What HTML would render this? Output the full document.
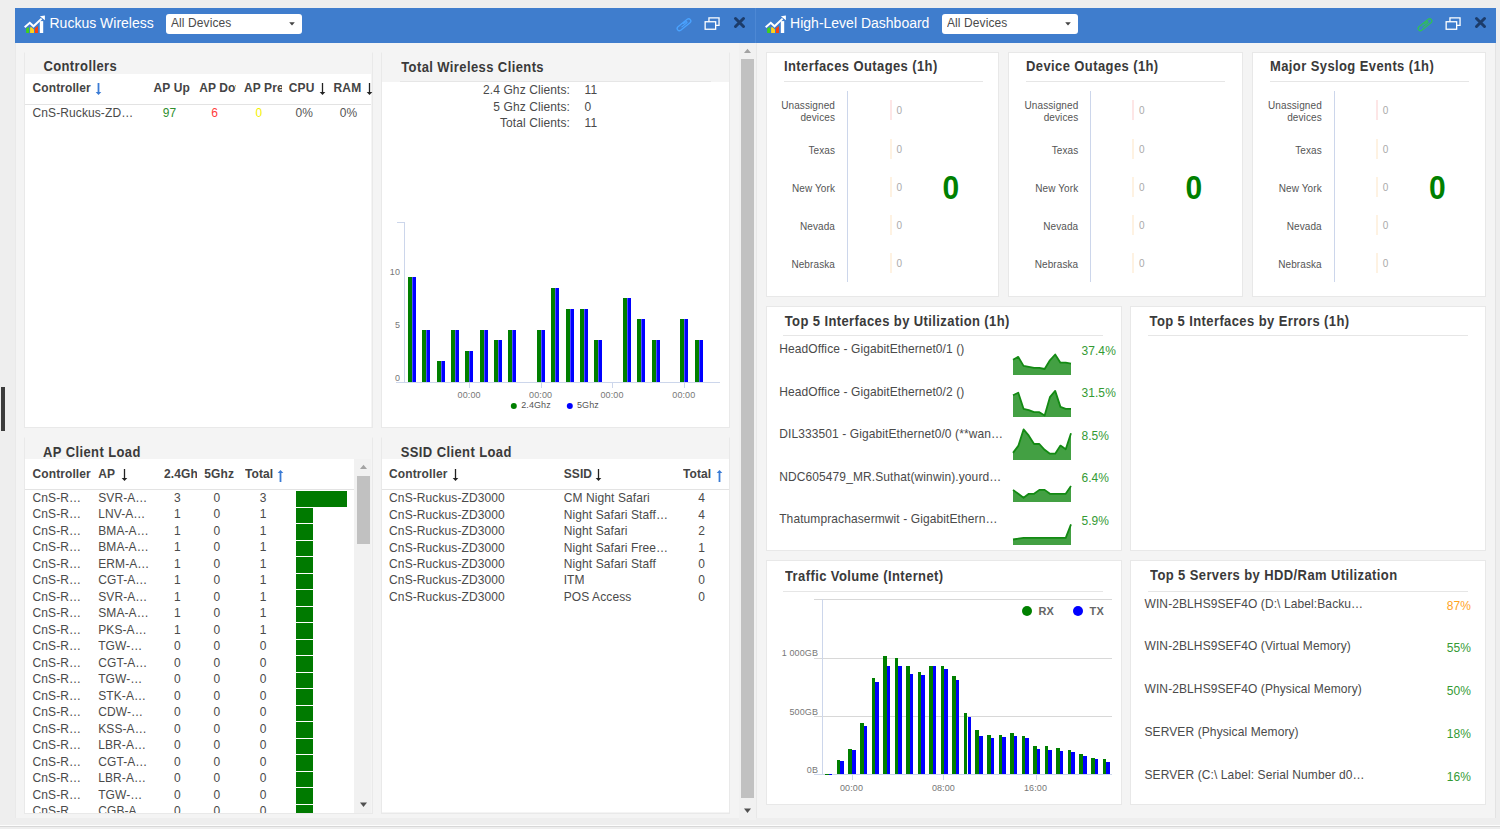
<!DOCTYPE html><html><head><meta charset="utf-8"><style>
html,body{margin:0;padding:0;}
body{width:1500px;height:829px;overflow:hidden;position:relative;background:#eeeeee;font-family:"Liberation Sans",sans-serif;}
.r{position:absolute;}
.t{position:absolute;white-space:nowrap;letter-spacing:0.1px;}
.card{position:absolute;background:#fff;border:1px solid #e8e8e8;box-sizing:border-box;}
</style></head><body>
<div class="r" style="left:15px;top:8px;width:741px;height:35px;background:#3f7dcd;"></div>
<svg class="r" style="left:20px;top:12px" width="30" height="26" viewBox="0 0 30 26">
<path d="M6.1 20.9 L6.1 17.4 Q6.1 15.6 7.6 15.6 L9.1 15.6 L9.1 20.9 Z" fill="#3fd21a"/>
<path d="M10.1 20.9 L10.1 15.2 L11.6 15.2 L14 17.6 L14 20.9 Z" fill="#ffd21a"/>
<path d="M14.9 20.9 L14.9 16.2 L17.9 13.9 L17.9 20.9 Z" fill="#ff3d0a"/>
<path d="M19.8 21 L19.8 9.1 L23.2 9.1 L23.2 21 Z" fill="#ffffff"/>
<polyline points="4.7,15.3 9.8,10.8 13.5,14.3 21.6,6.6" fill="none" stroke="#fff" stroke-width="2"/>
<path d="M19.9 4.2 L24.9 3.5 L24.9 8.3 Z" fill="#fff"/>
</svg>
<div class="t" style="left:49.5px;top:16px;font-size:14px;line-height:14px;color:#fff;letter-spacing:0px;">Ruckus Wireless</div>
<div class="r" style="left:166px;top:14px;width:136px;height:20px;background:#fff;border-radius:3px;"></div>
<div class="t" style="left:171px;top:17px;font-size:12px;line-height:12px;color:#4a4a4a;transform:scaleY(1.1);transform-origin:0 10px;">All Devices</div>
<svg class="r" style="left:288.5px;top:22.2px" width="6" height="4" viewBox="0 0 6 4"><path d="M0.2 0.2 L5.8 0.2 L3 3.4 Z" fill="#444"/></svg>
<svg class="r" style="left:673px;top:13.6px" width="22" height="20" viewBox="0 0 22 20">
<g transform="translate(6.3,14.5) rotate(-38.6)">
<rect x="-2.1" y="-2.2" width="16.2" height="4.4" rx="2.2" fill="none" stroke="#4aa3ff" stroke-width="1.3"/>
<path d="M2.6 0.3 L9.6 0.3 A0.9 0.9 0 0 0 9.6 -1.3 L6 -1.3" fill="none" stroke="#4aa3ff" stroke-width="1.1"/>
</g>
</svg>
<svg class="r" style="left:704px;top:16px" width="17" height="15" viewBox="0 0 17 15">
<path d="M4.95 5.75 L4.95 1.95 L15.05 1.95 L15.05 9.45 L11.65 9.45" fill="none" stroke="#fff" stroke-width="1.3"/>
<rect x="1.15" y="5.75" width="10.5" height="7.5" fill="none" stroke="#fff" stroke-width="1.3"/>
</svg>
<svg class="r" style="left:733px;top:16px" width="13" height="13" viewBox="0 0 13 13">
<path d="M2.5 2.5 L10.5 10.5 M10.5 2.5 L2.5 10.5" stroke="#1c3c6a" stroke-width="3" stroke-linecap="round"/>
</svg>
<div class="r" style="left:15px;top:43px;width:724px;height:775px;background:#f4f4f4;border-left:1px solid #e9e9e9;box-sizing:border-box;"></div>
<div class="r" style="left:739px;top:43px;width:17px;height:777px;background:#f1f1f1;"></div>
<div class="r" style="left:741px;top:59px;width:13px;height:739px;background:#c1c1c1;"></div>
<svg class="r" style="left:743px;top:48px" width="9" height="6" viewBox="0 0 9 6"><path d="M1 5 L4.5 0.8 L8 5 Z" fill="#a3a3a3"/></svg>
<svg class="r" style="left:743px;top:808px" width="9" height="6" viewBox="0 0 9 6"><path d="M1 0.5 L8 0.5 L4.5 5 Z" fill="#505050"/></svg>
<div class="r" style="left:24px;top:52px;width:349px;height:376px;border:1px solid #e9e9e9;border-top-color:#f4f4f4;box-sizing:border-box;background:#f4f4f4"></div>
<div class="t" style="left:43.4px;top:59.8px;font-size:13px;line-height:13px;color:#3a3a3a;font-weight:bold;letter-spacing:0.4px;transform:scaleY(1.1);transform-origin:0 11px;">Controllers</div>
<div class="r" style="left:25px;top:74px;width:346px;height:353px;background:#fff;"></div>
<div class="r" style="left:25px;top:104px;width:346px;height:1px;background:#e3e3e3;"></div>
<div class="t" style="left:32.5px;top:81.8px;font-size:12px;line-height:12px;color:#444;font-weight:bold;transform:scaleY(1.1);transform-origin:0 10px;">Controller</div>
<svg class="r" style="left:95.4px;top:83px" width="7" height="12" viewBox="0 0 7 12"><line x1="3.5" y1="0" x2="3.5" y2="9.5" stroke="#3a7bd5" stroke-width="1.8"/><path d="M0.7 9.1 L3.5 12 L6.3 9.1 Z" fill="#3a7bd5"/></svg>
<div class="t" style="left:153.6px;top:81.8px;font-size:12px;line-height:12px;color:#444;font-weight:bold;transform:scaleY(1.1);transform-origin:0 10px;">AP Up</div>
<div class="t" style="left:199.2px;top:81.8px;font-size:12px;line-height:12px;color:#444;font-weight:bold;width:37px;overflow:hidden;transform:scaleY(1.1);transform-origin:0 10px;">AP Down</div>
<div class="t" style="left:244px;top:81.8px;font-size:12px;line-height:12px;color:#444;font-weight:bold;width:37.5px;overflow:hidden;transform:scaleY(1.1);transform-origin:0 10px;">AP Pre</div>
<div class="t" style="left:288.8px;top:81.8px;font-size:12px;line-height:12px;color:#444;font-weight:bold;transform:scaleY(1.1);transform-origin:0 10px;">CPU</div>
<svg class="r" style="left:318.6px;top:83px" width="7" height="12" viewBox="0 0 7 12"><line x1="3.5" y1="0" x2="3.5" y2="9.5" stroke="#222" stroke-width="1.3"/><path d="M0.7 9.1 L3.5 12 L6.3 9.1 Z" fill="#222"/></svg>
<div class="t" style="left:333.6px;top:81.8px;font-size:12px;line-height:12px;color:#444;font-weight:bold;transform:scaleY(1.1);transform-origin:0 10px;">RAM</div>
<svg class="r" style="left:365.5px;top:83px" width="7" height="12" viewBox="0 0 7 12"><line x1="3.5" y1="0" x2="3.5" y2="9.5" stroke="#222" stroke-width="1.3"/><path d="M0.7 9.1 L3.5 12 L6.3 9.1 Z" fill="#222"/></svg>
<div class="t" style="left:32.5px;top:107.4px;font-size:12px;line-height:12px;color:#4a4a4a;transform:scaleY(1.1);transform-origin:0 10px;">CnS-Ruckus-ZD…</div>
<div class="t" style="left:-30.400000000000006px;width:400px;text-align:center;top:107.4px;font-size:12px;line-height:12px;color:#2f8f2f;transform:scaleY(1.1);transform-origin:0 10px;">97</div>
<div class="t" style="left:14.599999999999994px;width:400px;text-align:center;top:107.4px;font-size:12px;line-height:12px;color:#ff3b3b;transform:scaleY(1.1);transform-origin:0 10px;">6</div>
<div class="t" style="left:58.80000000000001px;width:400px;text-align:center;top:107.4px;font-size:12px;line-height:12px;color:#f4f000;transform:scaleY(1.1);transform-origin:0 10px;">0</div>
<div class="t" style="left:104.30000000000001px;width:400px;text-align:center;top:107.4px;font-size:12px;line-height:12px;color:#555;transform:scaleY(1.1);transform-origin:0 10px;">0%</div>
<div class="t" style="left:148.5px;width:400px;text-align:center;top:107.4px;font-size:12px;line-height:12px;color:#555;transform:scaleY(1.1);transform-origin:0 10px;">0%</div>
<div class="r" style="left:381px;top:52px;width:349px;height:376px;border:1px solid #e9e9e9;border-top-color:#f4f4f4;box-sizing:border-box;background:#f4f4f4"></div>
<div class="t" style="left:401.2px;top:60.8px;font-size:13px;line-height:13px;color:#3a3a3a;font-weight:bold;letter-spacing:0.4px;transform:scaleY(1.1);transform-origin:0 11px;">Total Wireless Clients</div>
<div class="r" style="left:382px;top:82px;width:347px;height:345px;background:#fff;"></div>
<div class="r" style="left:400px;top:81px;width:311px;height:1px;background:#e6e6e6;"></div>
<div class="t" style="left:170px;width:400px;text-align:right;top:84.4px;font-size:12px;line-height:12px;color:#4a4a4a;transform:scaleY(1.1);transform-origin:0 10px;">2.4 Ghz Clients:</div>
<div class="t" style="left:584.5px;top:84.4px;font-size:12px;line-height:12px;color:#4a4a4a;transform:scaleY(1.1);transform-origin:0 10px;">11</div>
<div class="t" style="left:170px;width:400px;text-align:right;top:100.9px;font-size:12px;line-height:12px;color:#4a4a4a;transform:scaleY(1.1);transform-origin:0 10px;">5 Ghz Clients:</div>
<div class="t" style="left:584.5px;top:100.9px;font-size:12px;line-height:12px;color:#4a4a4a;transform:scaleY(1.1);transform-origin:0 10px;">0</div>
<div class="t" style="left:170px;width:400px;text-align:right;top:117.4px;font-size:12px;line-height:12px;color:#4a4a4a;transform:scaleY(1.1);transform-origin:0 10px;">Total Clients:</div>
<div class="t" style="left:584.5px;top:117.4px;font-size:12px;line-height:12px;color:#4a4a4a;transform:scaleY(1.1);transform-origin:0 10px;">11</div>
<div class="r" style="left:404px;top:222px;width:1px;height:161px;background:#ccd6eb;"></div>
<div class="r" style="left:397px;top:222px;width:7px;height:1px;background:#ccd6eb;"></div>
<div class="r" style="left:396px;top:382px;width:324px;height:1.2px;background:#ccd6eb;"></div>
<div class="t" style="left:0px;width:400px;text-align:right;top:268px;font-size:9px;line-height:9px;color:#777;transform:scaleY(1.1);transform-origin:0 7px;">10</div>
<div class="t" style="left:0px;width:400px;text-align:right;top:320.5px;font-size:9px;line-height:9px;color:#777;transform:scaleY(1.1);transform-origin:0 7px;">5</div>
<div class="t" style="left:0px;width:400px;text-align:right;top:373.5px;font-size:9px;line-height:9px;color:#777;transform:scaleY(1.1);transform-origin:0 7px;">0</div>
<div class="r" style="left:408px;top:277.2px;width:4px;height:105.1px;background:#007f00;"></div>
<div class="r" style="left:412px;top:277.2px;width:4px;height:105.1px;background:#0000ff;"></div>
<div class="r" style="left:412px;top:277.2px;width:1px;height:105.1px;background:rgba(255,255,255,0.3);"></div>
<div class="r" style="left:422px;top:329.75px;width:4px;height:52.55px;background:#007f00;"></div>
<div class="r" style="left:426px;top:329.75px;width:4px;height:52.55px;background:#0000ff;"></div>
<div class="r" style="left:426px;top:329.75px;width:1px;height:52.55px;background:rgba(255,255,255,0.3);"></div>
<div class="r" style="left:437px;top:361.28px;width:4px;height:21.02px;background:#007f00;"></div>
<div class="r" style="left:441px;top:361.28px;width:4px;height:21.02px;background:#0000ff;"></div>
<div class="r" style="left:441px;top:361.28px;width:1px;height:21.02px;background:rgba(255,255,255,0.3);"></div>
<div class="r" style="left:451px;top:329.75px;width:4px;height:52.55px;background:#007f00;"></div>
<div class="r" style="left:455px;top:329.75px;width:4px;height:52.55px;background:#0000ff;"></div>
<div class="r" style="left:455px;top:329.75px;width:1px;height:52.55px;background:rgba(255,255,255,0.3);"></div>
<div class="r" style="left:465px;top:350.77px;width:4px;height:31.53px;background:#007f00;"></div>
<div class="r" style="left:469px;top:350.77px;width:4px;height:31.53px;background:#0000ff;"></div>
<div class="r" style="left:469px;top:350.77px;width:1px;height:31.53px;background:rgba(255,255,255,0.3);"></div>
<div class="r" style="left:480px;top:329.75px;width:4px;height:52.55px;background:#007f00;"></div>
<div class="r" style="left:484px;top:329.75px;width:4px;height:52.55px;background:#0000ff;"></div>
<div class="r" style="left:484px;top:329.75px;width:1px;height:52.55px;background:rgba(255,255,255,0.3);"></div>
<div class="r" style="left:494px;top:340.26px;width:4px;height:42.04px;background:#007f00;"></div>
<div class="r" style="left:498px;top:340.26px;width:4px;height:42.04px;background:#0000ff;"></div>
<div class="r" style="left:498px;top:340.26px;width:1px;height:42.04px;background:rgba(255,255,255,0.3);"></div>
<div class="r" style="left:508px;top:329.75px;width:4px;height:52.55px;background:#007f00;"></div>
<div class="r" style="left:512px;top:329.75px;width:4px;height:52.55px;background:#0000ff;"></div>
<div class="r" style="left:512px;top:329.75px;width:1px;height:52.55px;background:rgba(255,255,255,0.3);"></div>
<div class="r" style="left:537px;top:329.75px;width:4px;height:52.55px;background:#007f00;"></div>
<div class="r" style="left:541px;top:329.75px;width:4px;height:52.55px;background:#0000ff;"></div>
<div class="r" style="left:541px;top:329.75px;width:1px;height:52.55px;background:rgba(255,255,255,0.3);"></div>
<div class="r" style="left:551px;top:287.71px;width:4px;height:94.59px;background:#007f00;"></div>
<div class="r" style="left:555px;top:287.71px;width:4px;height:94.59px;background:#0000ff;"></div>
<div class="r" style="left:555px;top:287.71px;width:1px;height:94.59px;background:rgba(255,255,255,0.3);"></div>
<div class="r" style="left:566px;top:308.73px;width:4px;height:73.57px;background:#007f00;"></div>
<div class="r" style="left:570px;top:308.73px;width:4px;height:73.57px;background:#0000ff;"></div>
<div class="r" style="left:570px;top:308.73px;width:1px;height:73.57px;background:rgba(255,255,255,0.3);"></div>
<div class="r" style="left:580px;top:308.73px;width:4px;height:73.57px;background:#007f00;"></div>
<div class="r" style="left:584px;top:308.73px;width:4px;height:73.57px;background:#0000ff;"></div>
<div class="r" style="left:584px;top:308.73px;width:1px;height:73.57px;background:rgba(255,255,255,0.3);"></div>
<div class="r" style="left:594px;top:340.26px;width:4px;height:42.04px;background:#007f00;"></div>
<div class="r" style="left:598px;top:340.26px;width:4px;height:42.04px;background:#0000ff;"></div>
<div class="r" style="left:598px;top:340.26px;width:1px;height:42.04px;background:rgba(255,255,255,0.3);"></div>
<div class="r" style="left:623px;top:298.22px;width:4px;height:84.08px;background:#007f00;"></div>
<div class="r" style="left:627px;top:298.22px;width:4px;height:84.08px;background:#0000ff;"></div>
<div class="r" style="left:627px;top:298.22px;width:1px;height:84.08px;background:rgba(255,255,255,0.3);"></div>
<div class="r" style="left:637px;top:319.24px;width:4px;height:63.06px;background:#007f00;"></div>
<div class="r" style="left:641px;top:319.24px;width:4px;height:63.06px;background:#0000ff;"></div>
<div class="r" style="left:641px;top:319.24px;width:1px;height:63.06px;background:rgba(255,255,255,0.3);"></div>
<div class="r" style="left:652px;top:340.26px;width:4px;height:42.04px;background:#007f00;"></div>
<div class="r" style="left:656px;top:340.26px;width:4px;height:42.04px;background:#0000ff;"></div>
<div class="r" style="left:656px;top:340.26px;width:1px;height:42.04px;background:rgba(255,255,255,0.3);"></div>
<div class="r" style="left:680px;top:319.24px;width:4px;height:63.06px;background:#007f00;"></div>
<div class="r" style="left:684px;top:319.24px;width:4px;height:63.06px;background:#0000ff;"></div>
<div class="r" style="left:684px;top:319.24px;width:1px;height:63.06px;background:rgba(255,255,255,0.3);"></div>
<div class="r" style="left:695px;top:340.26px;width:4px;height:42.04px;background:#007f00;"></div>
<div class="r" style="left:699px;top:340.26px;width:4px;height:42.04px;background:#0000ff;"></div>
<div class="r" style="left:699px;top:340.26px;width:1px;height:42.04px;background:rgba(255,255,255,0.3);"></div>
<div class="r" style="left:469.1px;top:383px;width:1px;height:5px;background:#ccd6eb;"></div>
<div class="t" style="left:269.1px;width:400px;text-align:center;top:390.6px;font-size:9px;line-height:9px;color:#777;transform:scaleY(1.1);transform-origin:0 7px;">00:00</div>
<div class="r" style="left:540.6px;top:383px;width:1px;height:5px;background:#ccd6eb;"></div>
<div class="t" style="left:340.6px;width:400px;text-align:center;top:390.6px;font-size:9px;line-height:9px;color:#777;transform:scaleY(1.1);transform-origin:0 7px;">00:00</div>
<div class="r" style="left:612px;top:383px;width:1px;height:5px;background:#ccd6eb;"></div>
<div class="t" style="left:412px;width:400px;text-align:center;top:390.6px;font-size:9px;line-height:9px;color:#777;transform:scaleY(1.1);transform-origin:0 7px;">00:00</div>
<div class="r" style="left:683.8px;top:383px;width:1px;height:5px;background:#ccd6eb;"></div>
<div class="t" style="left:483.79999999999995px;width:400px;text-align:center;top:390.6px;font-size:9px;line-height:9px;color:#777;transform:scaleY(1.1);transform-origin:0 7px;">00:00</div>
<svg class="r" style="left:510px;top:402px" width="8" height="8"><circle cx="3.8" cy="4" r="3" fill="#007f00"/></svg>
<div class="t" style="left:521.2px;top:400.5px;font-size:9px;line-height:9px;color:#555;transform:scaleY(1.1);transform-origin:0 7px;">2.4Ghz</div>
<svg class="r" style="left:566px;top:402px" width="8" height="8"><circle cx="3.8" cy="4" r="3" fill="#0000ff"/></svg>
<div class="t" style="left:577px;top:400.5px;font-size:9px;line-height:9px;color:#555;transform:scaleY(1.1);transform-origin:0 7px;">5Ghz</div>
<div class="r" style="left:24px;top:437px;width:349px;height:377px;border:1px solid #e9e9e9;border-top-color:#f4f4f4;box-sizing:border-box;background:#f4f4f4"></div>
<div class="t" style="left:43px;top:445.8px;font-size:13px;line-height:13px;color:#3a3a3a;font-weight:bold;letter-spacing:0.4px;transform:scaleY(1.1);transform-origin:0 11px;">AP Client Load</div>
<div class="r" style="left:25px;top:459px;width:329px;height:354px;background:#fff;"></div>
<div class="r" style="left:25px;top:489px;width:329px;height:1px;background:#e3e3e3;"></div>
<div class="r" style="left:354px;top:459px;width:17px;height:354px;background:#f1f1f1;"></div>
<div class="r" style="left:357px;top:476px;width:13px;height:68px;background:#c1c1c1;"></div>
<svg class="r" style="left:359px;top:464px" width="9" height="6" viewBox="0 0 9 6"><path d="M1 5 L4.5 0.8 L8 5 Z" fill="#a3a3a3"/></svg>
<svg class="r" style="left:359px;top:801.5px" width="9" height="6" viewBox="0 0 9 6"><path d="M1 0.5 L8 0.5 L4.5 5 Z" fill="#505050"/></svg>
<div class="t" style="left:32.5px;top:467.7px;font-size:12px;line-height:12px;color:#444;font-weight:bold;transform:scaleY(1.1);transform-origin:0 10px;">Controller</div>
<div class="t" style="left:98.2px;top:467.7px;font-size:12px;line-height:12px;color:#444;font-weight:bold;transform:scaleY(1.1);transform-origin:0 10px;">AP</div>
<svg class="r" style="left:120.5px;top:469px" width="7" height="12" viewBox="0 0 7 12"><line x1="3.5" y1="0" x2="3.5" y2="9.5" stroke="#222" stroke-width="1.3"/><path d="M0.7 9.1 L3.5 12 L6.3 9.1 Z" fill="#222"/></svg>
<div class="t" style="left:164px;top:467.7px;font-size:12px;line-height:12px;color:#444;font-weight:bold;width:33px;overflow:hidden;transform:scaleY(1.1);transform-origin:0 10px;">2.4Ghz</div>
<div class="t" style="left:204.3px;top:467.7px;font-size:12px;line-height:12px;color:#444;font-weight:bold;transform:scaleY(1.1);transform-origin:0 10px;">5Ghz</div>
<div class="t" style="left:245px;top:467.7px;font-size:12px;line-height:12px;color:#444;font-weight:bold;transform:scaleY(1.1);transform-origin:0 10px;">Total</div>
<svg class="r" style="left:276.8px;top:469.5px" width="7" height="12" viewBox="0 0 7 12"><line x1="3.5" y1="2.5" x2="3.5" y2="12" stroke="#3a7bd5" stroke-width="1.8"/><path d="M0.7 2.9 L3.5 0 L6.3 2.9 Z" fill="#3a7bd5"/></svg>
<div class="r" style="left:25px;top:490px;width:329px;height:323px;overflow:hidden">
<div class="t" style="left:7.5px;top:1.5px;font-size:12px;line-height:12px;color:#4a4a4a;transform:scaleY(1.1);transform-origin:0 10px;">CnS-R…</div>
<div class="t" style="left:73.2px;top:1.5px;font-size:12px;line-height:12px;color:#4a4a4a;transform:scaleY(1.1);transform-origin:0 10px;">SVR-A…</div>
<div class="t" style="left:-47.5px;width:400px;text-align:center;top:1.5px;font-size:12px;line-height:12px;color:#4a4a4a;transform:scaleY(1.1);transform-origin:0 10px;">3</div>
<div class="t" style="left:-8px;width:400px;text-align:center;top:1.5px;font-size:12px;line-height:12px;color:#4a4a4a;transform:scaleY(1.1);transform-origin:0 10px;">0</div>
<div class="t" style="left:38.19999999999999px;width:400px;text-align:center;top:1.5px;font-size:12px;line-height:12px;color:#4a4a4a;transform:scaleY(1.1);transform-origin:0 10px;">3</div>
<div class="r" style="left:271px;top:1.0px;width:51px;height:15.5px;background:#007a00;"></div>
<div class="t" style="left:7.5px;top:18.0px;font-size:12px;line-height:12px;color:#4a4a4a;transform:scaleY(1.1);transform-origin:0 10px;">CnS-R…</div>
<div class="t" style="left:73.2px;top:18.0px;font-size:12px;line-height:12px;color:#4a4a4a;transform:scaleY(1.1);transform-origin:0 10px;">LNV-A…</div>
<div class="t" style="left:-47.5px;width:400px;text-align:center;top:18.0px;font-size:12px;line-height:12px;color:#4a4a4a;transform:scaleY(1.1);transform-origin:0 10px;">1</div>
<div class="t" style="left:-8px;width:400px;text-align:center;top:18.0px;font-size:12px;line-height:12px;color:#4a4a4a;transform:scaleY(1.1);transform-origin:0 10px;">0</div>
<div class="t" style="left:38.19999999999999px;width:400px;text-align:center;top:18.0px;font-size:12px;line-height:12px;color:#4a4a4a;transform:scaleY(1.1);transform-origin:0 10px;">1</div>
<div class="r" style="left:271px;top:17.5px;width:17px;height:15.5px;background:#007a00;"></div>
<div class="t" style="left:7.5px;top:34.5px;font-size:12px;line-height:12px;color:#4a4a4a;transform:scaleY(1.1);transform-origin:0 10px;">CnS-R…</div>
<div class="t" style="left:73.2px;top:34.5px;font-size:12px;line-height:12px;color:#4a4a4a;transform:scaleY(1.1);transform-origin:0 10px;">BMA-A…</div>
<div class="t" style="left:-47.5px;width:400px;text-align:center;top:34.5px;font-size:12px;line-height:12px;color:#4a4a4a;transform:scaleY(1.1);transform-origin:0 10px;">1</div>
<div class="t" style="left:-8px;width:400px;text-align:center;top:34.5px;font-size:12px;line-height:12px;color:#4a4a4a;transform:scaleY(1.1);transform-origin:0 10px;">0</div>
<div class="t" style="left:38.19999999999999px;width:400px;text-align:center;top:34.5px;font-size:12px;line-height:12px;color:#4a4a4a;transform:scaleY(1.1);transform-origin:0 10px;">1</div>
<div class="r" style="left:271px;top:34.0px;width:17px;height:15.5px;background:#007a00;"></div>
<div class="t" style="left:7.5px;top:51.0px;font-size:12px;line-height:12px;color:#4a4a4a;transform:scaleY(1.1);transform-origin:0 10px;">CnS-R…</div>
<div class="t" style="left:73.2px;top:51.0px;font-size:12px;line-height:12px;color:#4a4a4a;transform:scaleY(1.1);transform-origin:0 10px;">BMA-A…</div>
<div class="t" style="left:-47.5px;width:400px;text-align:center;top:51.0px;font-size:12px;line-height:12px;color:#4a4a4a;transform:scaleY(1.1);transform-origin:0 10px;">1</div>
<div class="t" style="left:-8px;width:400px;text-align:center;top:51.0px;font-size:12px;line-height:12px;color:#4a4a4a;transform:scaleY(1.1);transform-origin:0 10px;">0</div>
<div class="t" style="left:38.19999999999999px;width:400px;text-align:center;top:51.0px;font-size:12px;line-height:12px;color:#4a4a4a;transform:scaleY(1.1);transform-origin:0 10px;">1</div>
<div class="r" style="left:271px;top:50.5px;width:17px;height:15.5px;background:#007a00;"></div>
<div class="t" style="left:7.5px;top:67.5px;font-size:12px;line-height:12px;color:#4a4a4a;transform:scaleY(1.1);transform-origin:0 10px;">CnS-R…</div>
<div class="t" style="left:73.2px;top:67.5px;font-size:12px;line-height:12px;color:#4a4a4a;transform:scaleY(1.1);transform-origin:0 10px;">ERM-A…</div>
<div class="t" style="left:-47.5px;width:400px;text-align:center;top:67.5px;font-size:12px;line-height:12px;color:#4a4a4a;transform:scaleY(1.1);transform-origin:0 10px;">1</div>
<div class="t" style="left:-8px;width:400px;text-align:center;top:67.5px;font-size:12px;line-height:12px;color:#4a4a4a;transform:scaleY(1.1);transform-origin:0 10px;">0</div>
<div class="t" style="left:38.19999999999999px;width:400px;text-align:center;top:67.5px;font-size:12px;line-height:12px;color:#4a4a4a;transform:scaleY(1.1);transform-origin:0 10px;">1</div>
<div class="r" style="left:271px;top:67.0px;width:17px;height:15.5px;background:#007a00;"></div>
<div class="t" style="left:7.5px;top:84.0px;font-size:12px;line-height:12px;color:#4a4a4a;transform:scaleY(1.1);transform-origin:0 10px;">CnS-R…</div>
<div class="t" style="left:73.2px;top:84.0px;font-size:12px;line-height:12px;color:#4a4a4a;transform:scaleY(1.1);transform-origin:0 10px;">CGT-A…</div>
<div class="t" style="left:-47.5px;width:400px;text-align:center;top:84.0px;font-size:12px;line-height:12px;color:#4a4a4a;transform:scaleY(1.1);transform-origin:0 10px;">1</div>
<div class="t" style="left:-8px;width:400px;text-align:center;top:84.0px;font-size:12px;line-height:12px;color:#4a4a4a;transform:scaleY(1.1);transform-origin:0 10px;">0</div>
<div class="t" style="left:38.19999999999999px;width:400px;text-align:center;top:84.0px;font-size:12px;line-height:12px;color:#4a4a4a;transform:scaleY(1.1);transform-origin:0 10px;">1</div>
<div class="r" style="left:271px;top:83.5px;width:17px;height:15.5px;background:#007a00;"></div>
<div class="t" style="left:7.5px;top:100.5px;font-size:12px;line-height:12px;color:#4a4a4a;transform:scaleY(1.1);transform-origin:0 10px;">CnS-R…</div>
<div class="t" style="left:73.2px;top:100.5px;font-size:12px;line-height:12px;color:#4a4a4a;transform:scaleY(1.1);transform-origin:0 10px;">SVR-A…</div>
<div class="t" style="left:-47.5px;width:400px;text-align:center;top:100.5px;font-size:12px;line-height:12px;color:#4a4a4a;transform:scaleY(1.1);transform-origin:0 10px;">1</div>
<div class="t" style="left:-8px;width:400px;text-align:center;top:100.5px;font-size:12px;line-height:12px;color:#4a4a4a;transform:scaleY(1.1);transform-origin:0 10px;">0</div>
<div class="t" style="left:38.19999999999999px;width:400px;text-align:center;top:100.5px;font-size:12px;line-height:12px;color:#4a4a4a;transform:scaleY(1.1);transform-origin:0 10px;">1</div>
<div class="r" style="left:271px;top:100.0px;width:17px;height:15.5px;background:#007a00;"></div>
<div class="t" style="left:7.5px;top:117.0px;font-size:12px;line-height:12px;color:#4a4a4a;transform:scaleY(1.1);transform-origin:0 10px;">CnS-R…</div>
<div class="t" style="left:73.2px;top:117.0px;font-size:12px;line-height:12px;color:#4a4a4a;transform:scaleY(1.1);transform-origin:0 10px;">SMA-A…</div>
<div class="t" style="left:-47.5px;width:400px;text-align:center;top:117.0px;font-size:12px;line-height:12px;color:#4a4a4a;transform:scaleY(1.1);transform-origin:0 10px;">1</div>
<div class="t" style="left:-8px;width:400px;text-align:center;top:117.0px;font-size:12px;line-height:12px;color:#4a4a4a;transform:scaleY(1.1);transform-origin:0 10px;">0</div>
<div class="t" style="left:38.19999999999999px;width:400px;text-align:center;top:117.0px;font-size:12px;line-height:12px;color:#4a4a4a;transform:scaleY(1.1);transform-origin:0 10px;">1</div>
<div class="r" style="left:271px;top:116.5px;width:17px;height:15.5px;background:#007a00;"></div>
<div class="t" style="left:7.5px;top:133.5px;font-size:12px;line-height:12px;color:#4a4a4a;transform:scaleY(1.1);transform-origin:0 10px;">CnS-R…</div>
<div class="t" style="left:73.2px;top:133.5px;font-size:12px;line-height:12px;color:#4a4a4a;transform:scaleY(1.1);transform-origin:0 10px;">PKS-A…</div>
<div class="t" style="left:-47.5px;width:400px;text-align:center;top:133.5px;font-size:12px;line-height:12px;color:#4a4a4a;transform:scaleY(1.1);transform-origin:0 10px;">1</div>
<div class="t" style="left:-8px;width:400px;text-align:center;top:133.5px;font-size:12px;line-height:12px;color:#4a4a4a;transform:scaleY(1.1);transform-origin:0 10px;">0</div>
<div class="t" style="left:38.19999999999999px;width:400px;text-align:center;top:133.5px;font-size:12px;line-height:12px;color:#4a4a4a;transform:scaleY(1.1);transform-origin:0 10px;">1</div>
<div class="r" style="left:271px;top:133.0px;width:17px;height:15.5px;background:#007a00;"></div>
<div class="t" style="left:7.5px;top:150.0px;font-size:12px;line-height:12px;color:#4a4a4a;transform:scaleY(1.1);transform-origin:0 10px;">CnS-R…</div>
<div class="t" style="left:73.2px;top:150.0px;font-size:12px;line-height:12px;color:#4a4a4a;transform:scaleY(1.1);transform-origin:0 10px;">TGW-…</div>
<div class="t" style="left:-47.5px;width:400px;text-align:center;top:150.0px;font-size:12px;line-height:12px;color:#4a4a4a;transform:scaleY(1.1);transform-origin:0 10px;">0</div>
<div class="t" style="left:-8px;width:400px;text-align:center;top:150.0px;font-size:12px;line-height:12px;color:#4a4a4a;transform:scaleY(1.1);transform-origin:0 10px;">0</div>
<div class="t" style="left:38.19999999999999px;width:400px;text-align:center;top:150.0px;font-size:12px;line-height:12px;color:#4a4a4a;transform:scaleY(1.1);transform-origin:0 10px;">0</div>
<div class="r" style="left:271px;top:149.5px;width:17px;height:15.5px;background:#007a00;"></div>
<div class="t" style="left:7.5px;top:166.5px;font-size:12px;line-height:12px;color:#4a4a4a;transform:scaleY(1.1);transform-origin:0 10px;">CnS-R…</div>
<div class="t" style="left:73.2px;top:166.5px;font-size:12px;line-height:12px;color:#4a4a4a;transform:scaleY(1.1);transform-origin:0 10px;">CGT-A…</div>
<div class="t" style="left:-47.5px;width:400px;text-align:center;top:166.5px;font-size:12px;line-height:12px;color:#4a4a4a;transform:scaleY(1.1);transform-origin:0 10px;">0</div>
<div class="t" style="left:-8px;width:400px;text-align:center;top:166.5px;font-size:12px;line-height:12px;color:#4a4a4a;transform:scaleY(1.1);transform-origin:0 10px;">0</div>
<div class="t" style="left:38.19999999999999px;width:400px;text-align:center;top:166.5px;font-size:12px;line-height:12px;color:#4a4a4a;transform:scaleY(1.1);transform-origin:0 10px;">0</div>
<div class="r" style="left:271px;top:166.0px;width:17px;height:15.5px;background:#007a00;"></div>
<div class="t" style="left:7.5px;top:183.0px;font-size:12px;line-height:12px;color:#4a4a4a;transform:scaleY(1.1);transform-origin:0 10px;">CnS-R…</div>
<div class="t" style="left:73.2px;top:183.0px;font-size:12px;line-height:12px;color:#4a4a4a;transform:scaleY(1.1);transform-origin:0 10px;">TGW-…</div>
<div class="t" style="left:-47.5px;width:400px;text-align:center;top:183.0px;font-size:12px;line-height:12px;color:#4a4a4a;transform:scaleY(1.1);transform-origin:0 10px;">0</div>
<div class="t" style="left:-8px;width:400px;text-align:center;top:183.0px;font-size:12px;line-height:12px;color:#4a4a4a;transform:scaleY(1.1);transform-origin:0 10px;">0</div>
<div class="t" style="left:38.19999999999999px;width:400px;text-align:center;top:183.0px;font-size:12px;line-height:12px;color:#4a4a4a;transform:scaleY(1.1);transform-origin:0 10px;">0</div>
<div class="r" style="left:271px;top:182.5px;width:17px;height:15.5px;background:#007a00;"></div>
<div class="t" style="left:7.5px;top:199.5px;font-size:12px;line-height:12px;color:#4a4a4a;transform:scaleY(1.1);transform-origin:0 10px;">CnS-R…</div>
<div class="t" style="left:73.2px;top:199.5px;font-size:12px;line-height:12px;color:#4a4a4a;transform:scaleY(1.1);transform-origin:0 10px;">STK-A…</div>
<div class="t" style="left:-47.5px;width:400px;text-align:center;top:199.5px;font-size:12px;line-height:12px;color:#4a4a4a;transform:scaleY(1.1);transform-origin:0 10px;">0</div>
<div class="t" style="left:-8px;width:400px;text-align:center;top:199.5px;font-size:12px;line-height:12px;color:#4a4a4a;transform:scaleY(1.1);transform-origin:0 10px;">0</div>
<div class="t" style="left:38.19999999999999px;width:400px;text-align:center;top:199.5px;font-size:12px;line-height:12px;color:#4a4a4a;transform:scaleY(1.1);transform-origin:0 10px;">0</div>
<div class="r" style="left:271px;top:199.0px;width:17px;height:15.5px;background:#007a00;"></div>
<div class="t" style="left:7.5px;top:216.0px;font-size:12px;line-height:12px;color:#4a4a4a;transform:scaleY(1.1);transform-origin:0 10px;">CnS-R…</div>
<div class="t" style="left:73.2px;top:216.0px;font-size:12px;line-height:12px;color:#4a4a4a;transform:scaleY(1.1);transform-origin:0 10px;">CDW-…</div>
<div class="t" style="left:-47.5px;width:400px;text-align:center;top:216.0px;font-size:12px;line-height:12px;color:#4a4a4a;transform:scaleY(1.1);transform-origin:0 10px;">0</div>
<div class="t" style="left:-8px;width:400px;text-align:center;top:216.0px;font-size:12px;line-height:12px;color:#4a4a4a;transform:scaleY(1.1);transform-origin:0 10px;">0</div>
<div class="t" style="left:38.19999999999999px;width:400px;text-align:center;top:216.0px;font-size:12px;line-height:12px;color:#4a4a4a;transform:scaleY(1.1);transform-origin:0 10px;">0</div>
<div class="r" style="left:271px;top:215.5px;width:17px;height:15.5px;background:#007a00;"></div>
<div class="t" style="left:7.5px;top:232.5px;font-size:12px;line-height:12px;color:#4a4a4a;transform:scaleY(1.1);transform-origin:0 10px;">CnS-R…</div>
<div class="t" style="left:73.2px;top:232.5px;font-size:12px;line-height:12px;color:#4a4a4a;transform:scaleY(1.1);transform-origin:0 10px;">KSS-A…</div>
<div class="t" style="left:-47.5px;width:400px;text-align:center;top:232.5px;font-size:12px;line-height:12px;color:#4a4a4a;transform:scaleY(1.1);transform-origin:0 10px;">0</div>
<div class="t" style="left:-8px;width:400px;text-align:center;top:232.5px;font-size:12px;line-height:12px;color:#4a4a4a;transform:scaleY(1.1);transform-origin:0 10px;">0</div>
<div class="t" style="left:38.19999999999999px;width:400px;text-align:center;top:232.5px;font-size:12px;line-height:12px;color:#4a4a4a;transform:scaleY(1.1);transform-origin:0 10px;">0</div>
<div class="r" style="left:271px;top:232.0px;width:17px;height:15.5px;background:#007a00;"></div>
<div class="t" style="left:7.5px;top:249.0px;font-size:12px;line-height:12px;color:#4a4a4a;transform:scaleY(1.1);transform-origin:0 10px;">CnS-R…</div>
<div class="t" style="left:73.2px;top:249.0px;font-size:12px;line-height:12px;color:#4a4a4a;transform:scaleY(1.1);transform-origin:0 10px;">LBR-A…</div>
<div class="t" style="left:-47.5px;width:400px;text-align:center;top:249.0px;font-size:12px;line-height:12px;color:#4a4a4a;transform:scaleY(1.1);transform-origin:0 10px;">0</div>
<div class="t" style="left:-8px;width:400px;text-align:center;top:249.0px;font-size:12px;line-height:12px;color:#4a4a4a;transform:scaleY(1.1);transform-origin:0 10px;">0</div>
<div class="t" style="left:38.19999999999999px;width:400px;text-align:center;top:249.0px;font-size:12px;line-height:12px;color:#4a4a4a;transform:scaleY(1.1);transform-origin:0 10px;">0</div>
<div class="r" style="left:271px;top:248.5px;width:17px;height:15.5px;background:#007a00;"></div>
<div class="t" style="left:7.5px;top:265.5px;font-size:12px;line-height:12px;color:#4a4a4a;transform:scaleY(1.1);transform-origin:0 10px;">CnS-R…</div>
<div class="t" style="left:73.2px;top:265.5px;font-size:12px;line-height:12px;color:#4a4a4a;transform:scaleY(1.1);transform-origin:0 10px;">CGT-A…</div>
<div class="t" style="left:-47.5px;width:400px;text-align:center;top:265.5px;font-size:12px;line-height:12px;color:#4a4a4a;transform:scaleY(1.1);transform-origin:0 10px;">0</div>
<div class="t" style="left:-8px;width:400px;text-align:center;top:265.5px;font-size:12px;line-height:12px;color:#4a4a4a;transform:scaleY(1.1);transform-origin:0 10px;">0</div>
<div class="t" style="left:38.19999999999999px;width:400px;text-align:center;top:265.5px;font-size:12px;line-height:12px;color:#4a4a4a;transform:scaleY(1.1);transform-origin:0 10px;">0</div>
<div class="r" style="left:271px;top:265.0px;width:17px;height:15.5px;background:#007a00;"></div>
<div class="t" style="left:7.5px;top:282.0px;font-size:12px;line-height:12px;color:#4a4a4a;transform:scaleY(1.1);transform-origin:0 10px;">CnS-R…</div>
<div class="t" style="left:73.2px;top:282.0px;font-size:12px;line-height:12px;color:#4a4a4a;transform:scaleY(1.1);transform-origin:0 10px;">LBR-A…</div>
<div class="t" style="left:-47.5px;width:400px;text-align:center;top:282.0px;font-size:12px;line-height:12px;color:#4a4a4a;transform:scaleY(1.1);transform-origin:0 10px;">0</div>
<div class="t" style="left:-8px;width:400px;text-align:center;top:282.0px;font-size:12px;line-height:12px;color:#4a4a4a;transform:scaleY(1.1);transform-origin:0 10px;">0</div>
<div class="t" style="left:38.19999999999999px;width:400px;text-align:center;top:282.0px;font-size:12px;line-height:12px;color:#4a4a4a;transform:scaleY(1.1);transform-origin:0 10px;">0</div>
<div class="r" style="left:271px;top:281.5px;width:17px;height:15.5px;background:#007a00;"></div>
<div class="t" style="left:7.5px;top:298.5px;font-size:12px;line-height:12px;color:#4a4a4a;transform:scaleY(1.1);transform-origin:0 10px;">CnS-R…</div>
<div class="t" style="left:73.2px;top:298.5px;font-size:12px;line-height:12px;color:#4a4a4a;transform:scaleY(1.1);transform-origin:0 10px;">TGW-…</div>
<div class="t" style="left:-47.5px;width:400px;text-align:center;top:298.5px;font-size:12px;line-height:12px;color:#4a4a4a;transform:scaleY(1.1);transform-origin:0 10px;">0</div>
<div class="t" style="left:-8px;width:400px;text-align:center;top:298.5px;font-size:12px;line-height:12px;color:#4a4a4a;transform:scaleY(1.1);transform-origin:0 10px;">0</div>
<div class="t" style="left:38.19999999999999px;width:400px;text-align:center;top:298.5px;font-size:12px;line-height:12px;color:#4a4a4a;transform:scaleY(1.1);transform-origin:0 10px;">0</div>
<div class="r" style="left:271px;top:298.0px;width:17px;height:15.5px;background:#007a00;"></div>
<div class="t" style="left:7.5px;top:315.0px;font-size:12px;line-height:12px;color:#4a4a4a;transform:scaleY(1.1);transform-origin:0 10px;">CnS-R…</div>
<div class="t" style="left:73.2px;top:315.0px;font-size:12px;line-height:12px;color:#4a4a4a;transform:scaleY(1.1);transform-origin:0 10px;">CGB-A…</div>
<div class="t" style="left:-47.5px;width:400px;text-align:center;top:315.0px;font-size:12px;line-height:12px;color:#4a4a4a;transform:scaleY(1.1);transform-origin:0 10px;">0</div>
<div class="t" style="left:-8px;width:400px;text-align:center;top:315.0px;font-size:12px;line-height:12px;color:#4a4a4a;transform:scaleY(1.1);transform-origin:0 10px;">0</div>
<div class="t" style="left:38.19999999999999px;width:400px;text-align:center;top:315.0px;font-size:12px;line-height:12px;color:#4a4a4a;transform:scaleY(1.1);transform-origin:0 10px;">0</div>
<div class="r" style="left:271px;top:314.5px;width:17px;height:15.5px;background:#007a00;"></div>
</div>
<div class="r" style="left:381px;top:437px;width:349px;height:377px;border:1px solid #e9e9e9;border-top-color:#f4f4f4;box-sizing:border-box;background:#f4f4f4"></div>
<div class="t" style="left:400.7px;top:445.5px;font-size:13px;line-height:13px;color:#3a3a3a;font-weight:bold;letter-spacing:0.4px;transform:scaleY(1.1);transform-origin:0 11px;">SSID Client Load</div>
<div class="r" style="left:382px;top:459px;width:347px;height:353px;background:#fff;"></div>
<div class="r" style="left:382px;top:489px;width:347px;height:1px;background:#e3e3e3;"></div>
<div class="t" style="left:389.1px;top:468px;font-size:12px;line-height:12px;color:#444;font-weight:bold;transform:scaleY(1.1);transform-origin:0 10px;">Controller</div>
<svg class="r" style="left:451.7px;top:469px" width="7" height="12" viewBox="0 0 7 12"><line x1="3.5" y1="0" x2="3.5" y2="9.5" stroke="#222" stroke-width="1.3"/><path d="M0.7 9.1 L3.5 12 L6.3 9.1 Z" fill="#222"/></svg>
<div class="t" style="left:563.7px;top:468px;font-size:12px;line-height:12px;color:#444;font-weight:bold;transform:scaleY(1.1);transform-origin:0 10px;">SSID</div>
<svg class="r" style="left:595px;top:469px" width="7" height="12" viewBox="0 0 7 12"><line x1="3.5" y1="0" x2="3.5" y2="9.5" stroke="#222" stroke-width="1.3"/><path d="M0.7 9.1 L3.5 12 L6.3 9.1 Z" fill="#222"/></svg>
<div class="t" style="left:683px;top:468px;font-size:12px;line-height:12px;color:#444;font-weight:bold;transform:scaleY(1.1);transform-origin:0 10px;">Total</div>
<svg class="r" style="left:716px;top:469.5px" width="7" height="12" viewBox="0 0 7 12"><line x1="3.5" y1="2.5" x2="3.5" y2="12" stroke="#3a7bd5" stroke-width="1.8"/><path d="M0.7 2.9 L3.5 0 L6.3 2.9 Z" fill="#3a7bd5"/></svg>
<div class="t" style="left:389.1px;top:492.2px;font-size:12px;line-height:12px;color:#4a4a4a;transform:scaleY(1.1);transform-origin:0 10px;">CnS-Ruckus-ZD3000</div>
<div class="t" style="left:563.7px;top:492.2px;font-size:12px;line-height:12px;color:#4a4a4a;transform:scaleY(1.1);transform-origin:0 10px;">CM Night Safari</div>
<div class="t" style="left:501.70000000000005px;width:400px;text-align:center;top:492.2px;font-size:12px;line-height:12px;color:#4a4a4a;transform:scaleY(1.1);transform-origin:0 10px;">4</div>
<div class="t" style="left:389.1px;top:508.65px;font-size:12px;line-height:12px;color:#4a4a4a;transform:scaleY(1.1);transform-origin:0 10px;">CnS-Ruckus-ZD3000</div>
<div class="t" style="left:563.7px;top:508.65px;font-size:12px;line-height:12px;color:#4a4a4a;transform:scaleY(1.1);transform-origin:0 10px;">Night Safari Staff…</div>
<div class="t" style="left:501.70000000000005px;width:400px;text-align:center;top:508.65px;font-size:12px;line-height:12px;color:#4a4a4a;transform:scaleY(1.1);transform-origin:0 10px;">4</div>
<div class="t" style="left:389.1px;top:525.1px;font-size:12px;line-height:12px;color:#4a4a4a;transform:scaleY(1.1);transform-origin:0 10px;">CnS-Ruckus-ZD3000</div>
<div class="t" style="left:563.7px;top:525.1px;font-size:12px;line-height:12px;color:#4a4a4a;transform:scaleY(1.1);transform-origin:0 10px;">Night Safari</div>
<div class="t" style="left:501.70000000000005px;width:400px;text-align:center;top:525.1px;font-size:12px;line-height:12px;color:#4a4a4a;transform:scaleY(1.1);transform-origin:0 10px;">2</div>
<div class="t" style="left:389.1px;top:541.55px;font-size:12px;line-height:12px;color:#4a4a4a;transform:scaleY(1.1);transform-origin:0 10px;">CnS-Ruckus-ZD3000</div>
<div class="t" style="left:563.7px;top:541.55px;font-size:12px;line-height:12px;color:#4a4a4a;transform:scaleY(1.1);transform-origin:0 10px;">Night Safari Free…</div>
<div class="t" style="left:501.70000000000005px;width:400px;text-align:center;top:541.55px;font-size:12px;line-height:12px;color:#4a4a4a;transform:scaleY(1.1);transform-origin:0 10px;">1</div>
<div class="t" style="left:389.1px;top:558.0px;font-size:12px;line-height:12px;color:#4a4a4a;transform:scaleY(1.1);transform-origin:0 10px;">CnS-Ruckus-ZD3000</div>
<div class="t" style="left:563.7px;top:558.0px;font-size:12px;line-height:12px;color:#4a4a4a;transform:scaleY(1.1);transform-origin:0 10px;">Night Safari Staff</div>
<div class="t" style="left:501.70000000000005px;width:400px;text-align:center;top:558.0px;font-size:12px;line-height:12px;color:#4a4a4a;transform:scaleY(1.1);transform-origin:0 10px;">0</div>
<div class="t" style="left:389.1px;top:574.45px;font-size:12px;line-height:12px;color:#4a4a4a;transform:scaleY(1.1);transform-origin:0 10px;">CnS-Ruckus-ZD3000</div>
<div class="t" style="left:563.7px;top:574.45px;font-size:12px;line-height:12px;color:#4a4a4a;transform:scaleY(1.1);transform-origin:0 10px;">ITM</div>
<div class="t" style="left:501.70000000000005px;width:400px;text-align:center;top:574.45px;font-size:12px;line-height:12px;color:#4a4a4a;transform:scaleY(1.1);transform-origin:0 10px;">0</div>
<div class="t" style="left:389.1px;top:590.9px;font-size:12px;line-height:12px;color:#4a4a4a;transform:scaleY(1.1);transform-origin:0 10px;">CnS-Ruckus-ZD3000</div>
<div class="t" style="left:563.7px;top:590.9px;font-size:12px;line-height:12px;color:#4a4a4a;transform:scaleY(1.1);transform-origin:0 10px;">POS Access</div>
<div class="t" style="left:501.70000000000005px;width:400px;text-align:center;top:590.9px;font-size:12px;line-height:12px;color:#4a4a4a;transform:scaleY(1.1);transform-origin:0 10px;">0</div>
<div class="r" style="left:756px;top:8px;width:740px;height:35px;background:#3f7dcd;"></div>
<div class="r" style="left:755px;top:8px;width:1px;height:35px;background:#4d88d4;"></div>
<svg class="r" style="left:761px;top:12px" width="30" height="26" viewBox="0 0 30 26">
<path d="M6.1 20.9 L6.1 17.4 Q6.1 15.6 7.6 15.6 L9.1 15.6 L9.1 20.9 Z" fill="#3fd21a"/>
<path d="M10.1 20.9 L10.1 15.2 L11.6 15.2 L14 17.6 L14 20.9 Z" fill="#ffd21a"/>
<path d="M14.9 20.9 L14.9 16.2 L17.9 13.9 L17.9 20.9 Z" fill="#ff3d0a"/>
<path d="M19.8 21 L19.8 9.1 L23.2 9.1 L23.2 21 Z" fill="#ffffff"/>
<polyline points="4.7,15.3 9.8,10.8 13.5,14.3 21.6,6.6" fill="none" stroke="#fff" stroke-width="2"/>
<path d="M19.9 4.2 L24.9 3.5 L24.9 8.3 Z" fill="#fff"/>
</svg>
<div class="t" style="left:790.1px;top:16px;font-size:14px;line-height:14px;color:#fff;letter-spacing:0px;">High-Level Dashboard</div>
<div class="r" style="left:942px;top:14px;width:136px;height:20px;background:#fff;border-radius:3px;"></div>
<div class="t" style="left:947px;top:17px;font-size:12px;line-height:12px;color:#4a4a4a;transform:scaleY(1.1);transform-origin:0 10px;">All Devices</div>
<svg class="r" style="left:1064.5px;top:22.2px" width="6" height="4" viewBox="0 0 6 4"><path d="M0.2 0.2 L5.8 0.2 L3 3.4 Z" fill="#444"/></svg>
<svg class="r" style="left:1414px;top:13.6px" width="22" height="20" viewBox="0 0 22 20">
<g transform="translate(6.3,14.5) rotate(-38.6)">
<rect x="-2.1" y="-2.2" width="16.2" height="4.4" rx="2.2" fill="none" stroke="#2fbf5a" stroke-width="1.3"/>
<path d="M2.6 0.3 L9.6 0.3 A0.9 0.9 0 0 0 9.6 -1.3 L6 -1.3" fill="none" stroke="#2fbf5a" stroke-width="1.1"/>
</g>
</svg>
<svg class="r" style="left:1445px;top:16px" width="17" height="15" viewBox="0 0 17 15">
<path d="M4.95 5.75 L4.95 1.95 L15.05 1.95 L15.05 9.45 L11.65 9.45" fill="none" stroke="#fff" stroke-width="1.3"/>
<rect x="1.15" y="5.75" width="10.5" height="7.5" fill="none" stroke="#fff" stroke-width="1.3"/>
</svg>
<svg class="r" style="left:1474px;top:16px" width="13" height="13" viewBox="0 0 13 13">
<path d="M2.5 2.5 L10.5 10.5 M10.5 2.5 L2.5 10.5" stroke="#1c3c6a" stroke-width="3" stroke-linecap="round"/>
</svg>
<div class="r" style="left:756px;top:43px;width:740px;height:775px;background:#f4f4f4;border-left:1px solid #e8e8e8;border-right:1px solid #e3e3e3;box-sizing:border-box;"></div>
<div class="card" style="left:766px;top:52px;width:233px;height:245px"></div>
<div class="t" style="left:784px;top:60.0px;font-size:13px;line-height:13px;color:#3a3a3a;font-weight:bold;letter-spacing:0.4px;transform:scaleY(1.1);transform-origin:0 11px;">Interfaces Outages (1h)</div>
<div class="r" style="left:784px;top:81px;width:199px;height:1px;background:#e6e6e6;"></div>
<div class="r" style="left:847px;top:91px;width:1px;height:191px;background:#ccd6eb;"></div>
<div class="t" style="left:635px;width:200px;text-align:right;top:99.5px;font-size:10px;line-height:12px;color:#555">Unassigned<br>devices</div>
<div class="r" style="left:890px;top:100px;width:2px;height:20px;background:#fde6e6;"></div>
<div class="t" style="left:896.6px;top:106px;font-size:10px;line-height:10px;color:#aaa;letter-spacing:0px;">0</div>
<div class="t" style="left:435px;width:400px;text-align:right;top:145.5px;font-size:10px;line-height:10px;color:#555;">Texas</div>
<div class="r" style="left:890px;top:139px;width:2px;height:20px;background:#fef2e2;"></div>
<div class="t" style="left:896.6px;top:145px;font-size:10px;line-height:10px;color:#aaa;letter-spacing:0px;">0</div>
<div class="t" style="left:435px;width:400px;text-align:right;top:183.5px;font-size:10px;line-height:10px;color:#555;">New York</div>
<div class="r" style="left:890px;top:177px;width:2px;height:20px;background:#fef2e2;"></div>
<div class="t" style="left:896.6px;top:183px;font-size:10px;line-height:10px;color:#aaa;letter-spacing:0px;">0</div>
<div class="t" style="left:435px;width:400px;text-align:right;top:221.5px;font-size:10px;line-height:10px;color:#555;">Nevada</div>
<div class="r" style="left:890px;top:215px;width:2px;height:20px;background:#fef2e2;"></div>
<div class="t" style="left:896.6px;top:221px;font-size:10px;line-height:10px;color:#aaa;letter-spacing:0px;">0</div>
<div class="t" style="left:435px;width:400px;text-align:right;top:259.5px;font-size:10px;line-height:10px;color:#555;">Nebraska</div>
<div class="r" style="left:890px;top:253px;width:2px;height:20px;background:#fef2e2;"></div>
<div class="t" style="left:896.6px;top:259px;font-size:10px;line-height:10px;color:#aaa;letter-spacing:0px;">0</div>
<div class="t" style="left:750.8px;width:400px;text-align:center;top:174.2px;font-size:30px;line-height:30px;color:#008000;font-weight:bold;transform:scaleY(1.08);transform-origin:50% 25px;">0</div>
<div class="card" style="left:1008px;top:52px;width:235px;height:245px"></div>
<div class="t" style="left:1026px;top:60.0px;font-size:13px;line-height:13px;color:#3a3a3a;font-weight:bold;letter-spacing:0.4px;transform:scaleY(1.1);transform-origin:0 11px;">Device Outages (1h)</div>
<div class="r" style="left:1026px;top:81px;width:199px;height:1px;background:#e6e6e6;"></div>
<div class="r" style="left:1090.3px;top:91px;width:1px;height:191px;background:#ccd6eb;"></div>
<div class="t" style="left:878.3px;width:200px;text-align:right;top:99.5px;font-size:10px;line-height:12px;color:#555">Unassigned<br>devices</div>
<div class="r" style="left:1132px;top:100px;width:2px;height:20px;background:#fde6e6;"></div>
<div class="t" style="left:1138.99px;top:106px;font-size:10px;line-height:10px;color:#aaa;letter-spacing:0px;">0</div>
<div class="t" style="left:678.3px;width:400px;text-align:right;top:145.5px;font-size:10px;line-height:10px;color:#555;">Texas</div>
<div class="r" style="left:1132px;top:139px;width:2px;height:20px;background:#fef2e2;"></div>
<div class="t" style="left:1138.99px;top:145px;font-size:10px;line-height:10px;color:#aaa;letter-spacing:0px;">0</div>
<div class="t" style="left:678.3px;width:400px;text-align:right;top:183.5px;font-size:10px;line-height:10px;color:#555;">New York</div>
<div class="r" style="left:1132px;top:177px;width:2px;height:20px;background:#fef2e2;"></div>
<div class="t" style="left:1138.99px;top:183px;font-size:10px;line-height:10px;color:#aaa;letter-spacing:0px;">0</div>
<div class="t" style="left:678.3px;width:400px;text-align:right;top:221.5px;font-size:10px;line-height:10px;color:#555;">Nevada</div>
<div class="r" style="left:1132px;top:215px;width:2px;height:20px;background:#fef2e2;"></div>
<div class="t" style="left:1138.99px;top:221px;font-size:10px;line-height:10px;color:#aaa;letter-spacing:0px;">0</div>
<div class="t" style="left:678.3px;width:400px;text-align:right;top:259.5px;font-size:10px;line-height:10px;color:#555;">Nebraska</div>
<div class="r" style="left:1132px;top:253px;width:2px;height:20px;background:#fef2e2;"></div>
<div class="t" style="left:1138.99px;top:259px;font-size:10px;line-height:10px;color:#aaa;letter-spacing:0px;">0</div>
<div class="t" style="left:993.8399999999999px;width:400px;text-align:center;top:174.2px;font-size:30px;line-height:30px;color:#008000;font-weight:bold;transform:scaleY(1.08);transform-origin:50% 25px;">0</div>
<div class="card" style="left:1252px;top:52px;width:234px;height:245px"></div>
<div class="t" style="left:1270px;top:60.0px;font-size:13px;line-height:13px;color:#3a3a3a;font-weight:bold;letter-spacing:0.4px;transform:scaleY(1.1);transform-origin:0 11px;">Major Syslog Events (1h)</div>
<div class="r" style="left:1270px;top:81px;width:199px;height:1px;background:#e6e6e6;"></div>
<div class="r" style="left:1333.8px;top:91px;width:1px;height:191px;background:#ccd6eb;"></div>
<div class="t" style="left:1121.8px;width:200px;text-align:right;top:99.5px;font-size:10px;line-height:12px;color:#555">Unassigned<br>devices</div>
<div class="r" style="left:1376px;top:100px;width:2px;height:20px;background:#fde6e6;"></div>
<div class="t" style="left:1382.84px;top:106px;font-size:10px;line-height:10px;color:#aaa;letter-spacing:0px;">0</div>
<div class="t" style="left:921.8px;width:400px;text-align:right;top:145.5px;font-size:10px;line-height:10px;color:#555;">Texas</div>
<div class="r" style="left:1376px;top:139px;width:2px;height:20px;background:#fef2e2;"></div>
<div class="t" style="left:1382.84px;top:145px;font-size:10px;line-height:10px;color:#aaa;letter-spacing:0px;">0</div>
<div class="t" style="left:921.8px;width:400px;text-align:right;top:183.5px;font-size:10px;line-height:10px;color:#555;">New York</div>
<div class="r" style="left:1376px;top:177px;width:2px;height:20px;background:#fef2e2;"></div>
<div class="t" style="left:1382.84px;top:183px;font-size:10px;line-height:10px;color:#aaa;letter-spacing:0px;">0</div>
<div class="t" style="left:921.8px;width:400px;text-align:right;top:221.5px;font-size:10px;line-height:10px;color:#555;">Nevada</div>
<div class="r" style="left:1376px;top:215px;width:2px;height:20px;background:#fef2e2;"></div>
<div class="t" style="left:1382.84px;top:221px;font-size:10px;line-height:10px;color:#aaa;letter-spacing:0px;">0</div>
<div class="t" style="left:921.8px;width:400px;text-align:right;top:259.5px;font-size:10px;line-height:10px;color:#555;">Nebraska</div>
<div class="r" style="left:1376px;top:253px;width:2px;height:20px;background:#fef2e2;"></div>
<div class="t" style="left:1382.84px;top:259px;font-size:10px;line-height:10px;color:#aaa;letter-spacing:0px;">0</div>
<div class="t" style="left:1237.44px;width:400px;text-align:center;top:174.2px;font-size:30px;line-height:30px;color:#008000;font-weight:bold;transform:scaleY(1.08);transform-origin:50% 25px;">0</div>
<div class="card" style="left:766px;top:306px;width:356px;height:245px"></div>
<div class="t" style="left:784.7px;top:314.5px;font-size:13px;line-height:13px;color:#3a3a3a;font-weight:bold;letter-spacing:0.4px;transform:scaleY(1.1);transform-origin:0 11px;">Top 5 Interfaces by Utilization (1h)</div>
<div class="r" style="left:783px;top:335px;width:320px;height:1px;background:#e6e6e6;"></div>
<div class="t" style="left:779.2px;top:343.3px;font-size:12px;line-height:12px;color:#4a4a4a;transform:scaleY(1.1);transform-origin:0 10px;">HeadOffice - GigabitEthernet0/1 ()</div>
<div class="t" style="left:1081.4px;top:344.8px;font-size:12px;line-height:12px;color:#349a34;transform:scaleY(1.1);transform-origin:0 10px;">37.4%</div>
<svg class="r" style="left:1013px;top:342.6px;overflow:visible" width="58" height="32"><polygon points="0,32 0.00,16.80 5.27,13.90 10.55,22.90 15.82,23.90 21.09,24.80 26.36,24.80 31.64,26.00 36.91,17.30 42.18,11.50 47.45,19.70 52.73,19.70 58.00,20.70 58,32" fill="#43a043"/><polyline points="0.00,16.80 5.27,13.90 10.55,22.90 15.82,23.90 21.09,24.80 26.36,24.80 31.64,26.00 36.91,17.30 42.18,11.50 47.45,19.70 52.73,19.70 58.00,20.70" fill="none" stroke="#138a13" stroke-width="1.8" stroke-linejoin="round"/></svg>
<div class="t" style="left:779.2px;top:385.75px;font-size:12px;line-height:12px;color:#4a4a4a;transform:scaleY(1.1);transform-origin:0 10px;">HeadOffice - GigabitEthernet0/2 ()</div>
<div class="t" style="left:1081.4px;top:387.25px;font-size:12px;line-height:12px;color:#349a34;transform:scaleY(1.1);transform-origin:0 10px;">31.5%</div>
<svg class="r" style="left:1013px;top:385.2px;overflow:visible" width="58" height="32"><polygon points="0,32 0.00,10.30 5.27,7.70 10.55,23.80 15.82,25.20 21.09,27.20 26.36,27.20 31.64,30.60 36.91,12.20 42.18,5.90 47.45,21.90 52.73,23.80 58.00,23.80 58,32" fill="#43a043"/><polyline points="0.00,10.30 5.27,7.70 10.55,23.80 15.82,25.20 21.09,27.20 26.36,27.20 31.64,30.60 36.91,12.20 42.18,5.90 47.45,21.90 52.73,23.80 58.00,23.80" fill="none" stroke="#138a13" stroke-width="1.8" stroke-linejoin="round"/></svg>
<div class="t" style="left:779.2px;top:428.2px;font-size:12px;line-height:12px;color:#4a4a4a;transform:scaleY(1.1);transform-origin:0 10px;">DIL333501 - GigabitEthernet0/0 (**wan…</div>
<div class="t" style="left:1081.4px;top:429.7px;font-size:12px;line-height:12px;color:#349a34;transform:scaleY(1.1);transform-origin:0 10px;">8.5%</div>
<svg class="r" style="left:1013px;top:427.9px;overflow:visible" width="58" height="32"><polygon points="0,32 0.00,24.90 5.27,17.90 10.55,1.40 15.82,7.70 21.09,16.00 26.36,16.00 31.64,21.80 36.91,25.70 42.18,25.70 47.45,17.60 52.73,21.30 58.00,5.30 58,32" fill="#43a043"/><polyline points="0.00,24.90 5.27,17.90 10.55,1.40 15.82,7.70 21.09,16.00 26.36,16.00 31.64,21.80 36.91,25.70 42.18,25.70 47.45,17.60 52.73,21.30 58.00,5.30" fill="none" stroke="#138a13" stroke-width="1.8" stroke-linejoin="round"/></svg>
<div class="t" style="left:779.2px;top:470.65px;font-size:12px;line-height:12px;color:#4a4a4a;transform:scaleY(1.1);transform-origin:0 10px;">NDC605479_MR.Suthat(winwin).yourd…</div>
<div class="t" style="left:1081.4px;top:472.15px;font-size:12px;line-height:12px;color:#349a34;transform:scaleY(1.1);transform-origin:0 10px;">6.4%</div>
<svg class="r" style="left:1013px;top:470.4px;overflow:visible" width="58" height="32"><polygon points="0,32 0.00,19.90 5.27,23.80 10.55,27.80 15.82,23.80 21.09,23.80 26.36,19.90 31.64,19.90 36.91,23.80 42.18,23.80 47.45,23.80 52.73,23.80 58.00,16.00 58,32" fill="#43a043"/><polyline points="0.00,19.90 5.27,23.80 10.55,27.80 15.82,23.80 21.09,23.80 26.36,19.90 31.64,19.90 36.91,23.80 42.18,23.80 47.45,23.80 52.73,23.80 58.00,16.00" fill="none" stroke="#138a13" stroke-width="1.8" stroke-linejoin="round"/></svg>
<div class="t" style="left:779.2px;top:513.1px;font-size:12px;line-height:12px;color:#4a4a4a;transform:scaleY(1.1);transform-origin:0 10px;">Thatumprachasermwit - GigabitEthern…</div>
<div class="t" style="left:1081.4px;top:514.6px;font-size:12px;line-height:12px;color:#349a34;transform:scaleY(1.1);transform-origin:0 10px;">5.9%</div>
<svg class="r" style="left:1013px;top:513.4px;overflow:visible" width="58" height="32"><polygon points="0,32 0.00,26.50 5.27,25.70 10.55,24.90 15.82,24.90 21.09,24.90 26.36,24.90 31.64,24.90 36.91,24.90 42.18,24.90 47.45,24.90 52.73,24.90 58.00,11.30 58,32" fill="#43a043"/><polyline points="0.00,26.50 5.27,25.70 10.55,24.90 15.82,24.90 21.09,24.90 26.36,24.90 31.64,24.90 36.91,24.90 42.18,24.90 47.45,24.90 52.73,24.90 58.00,11.30" fill="none" stroke="#138a13" stroke-width="1.8" stroke-linejoin="round"/></svg>
<div class="card" style="left:1130px;top:306px;width:356px;height:245px"></div>
<div class="t" style="left:1149.5px;top:314.5px;font-size:13px;line-height:13px;color:#3a3a3a;font-weight:bold;letter-spacing:0.4px;transform:scaleY(1.1);transform-origin:0 11px;">Top 5 Interfaces by Errors (1h)</div>
<div class="r" style="left:1148px;top:335px;width:320px;height:1px;background:#e6e6e6;"></div>
<div class="card" style="left:766px;top:560px;width:356px;height:245px"></div>
<div class="t" style="left:785px;top:569.5999999999999px;font-size:13px;line-height:13px;color:#3a3a3a;font-weight:bold;letter-spacing:0.4px;transform:scaleY(1.1);transform-origin:0 11px;">Traffic Volume (Internet)</div>
<div class="r" style="left:783px;top:590.5px;width:320px;height:1px;background:#e6e6e6;"></div>
<div class="r" style="left:814px;top:599px;width:298px;height:1px;background:#d8d8d8;"></div>
<div class="r" style="left:814px;top:657.5px;width:298px;height:1px;background:#d8d8d8;"></div>
<div class="r" style="left:814px;top:716px;width:298px;height:1px;background:#d8d8d8;"></div>
<div class="r" style="left:814px;top:774px;width:298px;height:1px;background:#ccd6eb;"></div>
<div class="r" style="left:822px;top:599px;width:1px;height:176px;background:#ccd6eb;"></div>
<div class="t" style="left:418px;width:400px;text-align:right;top:649px;font-size:9px;line-height:9px;color:#777;transform:scaleY(1.1);transform-origin:0 7px;">1 000GB</div>
<div class="t" style="left:418px;width:400px;text-align:right;top:707.5px;font-size:9px;line-height:9px;color:#777;transform:scaleY(1.1);transform-origin:0 7px;">500GB</div>
<div class="t" style="left:418px;width:400px;text-align:right;top:766px;font-size:9px;line-height:9px;color:#777;transform:scaleY(1.1);transform-origin:0 7px;">0B</div>
<div class="r" style="left:825.3px;top:773.9px;width:3.6px;height:0.4px;background:#007f00;"></div>
<div class="r" style="left:828.9px;top:773.9px;width:3.5px;height:0.4px;background:#0000ff;"></div>
<div class="r" style="left:836.85px;top:760.3px;width:3.6px;height:14px;background:#007f00;"></div>
<div class="r" style="left:840.45px;top:761.1px;width:3.5px;height:13.2px;background:#0000ff;"></div>
<div class="r" style="left:848.4px;top:748.6px;width:3.6px;height:25.7px;background:#007f00;"></div>
<div class="r" style="left:852.0px;top:750.3px;width:3.5px;height:24px;background:#0000ff;"></div>
<div class="r" style="left:859.95px;top:723.3px;width:3.6px;height:51px;background:#007f00;"></div>
<div class="r" style="left:863.55px;top:726.3px;width:3.5px;height:48px;background:#0000ff;"></div>
<div class="r" style="left:871.5px;top:677.5px;width:3.6px;height:96.8px;background:#007f00;"></div>
<div class="r" style="left:875.1px;top:682.3px;width:3.5px;height:92px;background:#0000ff;"></div>
<div class="r" style="left:883.05px;top:655.9px;width:3.6px;height:118.4px;background:#007f00;"></div>
<div class="r" style="left:886.65px;top:665.5px;width:3.5px;height:108.8px;background:#0000ff;"></div>
<div class="r" style="left:894.6px;top:658.1px;width:3.6px;height:116.2px;background:#007f00;"></div>
<div class="r" style="left:898.2px;top:665.5px;width:3.5px;height:108.8px;background:#0000ff;"></div>
<div class="r" style="left:906.15px;top:666.4px;width:3.6px;height:107.9px;background:#007f00;"></div>
<div class="r" style="left:909.75px;top:674.3px;width:3.5px;height:100px;background:#0000ff;"></div>
<div class="r" style="left:917.7px;top:671.6px;width:3.6px;height:102.7px;background:#007f00;"></div>
<div class="r" style="left:921.3px;top:675.0px;width:3.5px;height:99.3px;background:#0000ff;"></div>
<div class="r" style="left:929.25px;top:665.5px;width:3.6px;height:108.8px;background:#007f00;"></div>
<div class="r" style="left:932.85px;top:666.0px;width:3.5px;height:108.3px;background:#0000ff;"></div>
<div class="r" style="left:940.8px;top:665.5px;width:3.6px;height:108.8px;background:#007f00;"></div>
<div class="r" style="left:944.4px;top:668.9px;width:3.5px;height:105.4px;background:#0000ff;"></div>
<div class="r" style="left:952.35px;top:676.1px;width:3.6px;height:98.2px;background:#007f00;"></div>
<div class="r" style="left:955.95px;top:680.4px;width:3.5px;height:93.9px;background:#0000ff;"></div>
<div class="r" style="left:963.9px;top:713.0px;width:3.6px;height:61.3px;background:#007f00;"></div>
<div class="r" style="left:967.5px;top:717.3px;width:3.5px;height:57px;background:#0000ff;"></div>
<div class="r" style="left:975.45px;top:730.3px;width:3.6px;height:44px;background:#007f00;"></div>
<div class="r" style="left:979.05px;top:735.8px;width:3.5px;height:38.5px;background:#0000ff;"></div>
<div class="r" style="left:987.0px;top:735.0px;width:3.6px;height:39.3px;background:#007f00;"></div>
<div class="r" style="left:990.6px;top:737.6px;width:3.5px;height:36.7px;background:#0000ff;"></div>
<div class="r" style="left:998.55px;top:735.0px;width:3.6px;height:39.3px;background:#007f00;"></div>
<div class="r" style="left:1002.15px;top:736.6px;width:3.5px;height:37.7px;background:#0000ff;"></div>
<div class="r" style="left:1010.1px;top:733.3px;width:3.6px;height:41px;background:#007f00;"></div>
<div class="r" style="left:1013.7px;top:735.6px;width:3.5px;height:38.7px;background:#0000ff;"></div>
<div class="r" style="left:1021.65px;top:735.8px;width:3.6px;height:38.5px;background:#007f00;"></div>
<div class="r" style="left:1025.25px;top:737.6px;width:3.5px;height:36.7px;background:#0000ff;"></div>
<div class="r" style="left:1033.2px;top:746.3px;width:3.6px;height:28px;background:#007f00;"></div>
<div class="r" style="left:1036.8px;top:749.0px;width:3.5px;height:25.3px;background:#0000ff;"></div>
<div class="r" style="left:1044.75px;top:746.3px;width:3.6px;height:28px;background:#007f00;"></div>
<div class="r" style="left:1048.35px;top:749.7px;width:3.5px;height:24.6px;background:#0000ff;"></div>
<div class="r" style="left:1056.3px;top:748.0px;width:3.6px;height:26.3px;background:#007f00;"></div>
<div class="r" style="left:1059.9px;top:750.5px;width:3.5px;height:23.8px;background:#0000ff;"></div>
<div class="r" style="left:1067.85px;top:749.7px;width:3.6px;height:24.6px;background:#007f00;"></div>
<div class="r" style="left:1071.45px;top:752.3px;width:3.5px;height:22px;background:#0000ff;"></div>
<div class="r" style="left:1079.4px;top:754.3px;width:3.6px;height:20px;background:#007f00;"></div>
<div class="r" style="left:1083.0px;top:756.1px;width:3.5px;height:18.2px;background:#0000ff;"></div>
<div class="r" style="left:1090.95px;top:757.6px;width:3.6px;height:16.7px;background:#007f00;"></div>
<div class="r" style="left:1094.55px;top:759.1px;width:3.5px;height:15.2px;background:#0000ff;"></div>
<div class="r" style="left:1102.5px;top:759.4px;width:3.6px;height:14.9px;background:#007f00;"></div>
<div class="r" style="left:1106.1px;top:762.4px;width:3.5px;height:11.9px;background:#0000ff;"></div>
<div class="r" style="left:851.5px;top:775px;width:1px;height:5px;background:#ccd6eb;"></div>
<div class="t" style="left:651.5px;width:400px;text-align:center;top:783.8px;font-size:9px;line-height:9px;color:#777;transform:scaleY(1.1);transform-origin:0 7px;">00:00</div>
<div class="r" style="left:943.4px;top:775px;width:1px;height:5px;background:#ccd6eb;"></div>
<div class="t" style="left:743.4px;width:400px;text-align:center;top:783.8px;font-size:9px;line-height:9px;color:#777;transform:scaleY(1.1);transform-origin:0 7px;">08:00</div>
<div class="r" style="left:1035.5px;top:775px;width:1px;height:5px;background:#ccd6eb;"></div>
<div class="t" style="left:835.5px;width:400px;text-align:center;top:783.8px;font-size:9px;line-height:9px;color:#777;transform:scaleY(1.1);transform-origin:0 7px;">16:00</div>
<svg class="r" style="left:1021px;top:605px" width="12" height="12"><circle cx="6" cy="6" r="5" fill="#008000"/></svg>
<div class="t" style="left:1038.5px;top:606px;font-size:11px;line-height:11px;color:#666;font-weight:bold;">RX</div>
<svg class="r" style="left:1072px;top:605px" width="12" height="12"><circle cx="6" cy="6" r="5" fill="#0000ff"/></svg>
<div class="t" style="left:1089.6px;top:606px;font-size:11px;line-height:11px;color:#666;font-weight:bold;">TX</div>
<div class="card" style="left:1130px;top:560px;width:356px;height:245px"></div>
<div class="t" style="left:1150px;top:569.3px;font-size:13px;line-height:13px;color:#3a3a3a;font-weight:bold;letter-spacing:0.4px;transform:scaleY(1.1);transform-origin:0 11px;">Top 5 Servers by HDD/Ram Utilization</div>
<div class="r" style="left:1148px;top:590.5px;width:320px;height:1px;background:#e6e6e6;"></div>
<div class="t" style="left:1144.5px;top:597.5px;font-size:12px;line-height:12px;color:#4a4a4a;transform:scaleY(1.1);transform-origin:0 10px;">WIN-2BLHS9SEF4O (D:\ Label:Backu…</div>
<div class="t" style="left:1071px;width:400px;text-align:right;top:599.5px;font-size:12px;line-height:12px;color:#ffa21f;transform:scaleY(1.1);transform-origin:0 10px;">87%</div>
<div class="t" style="left:1144.5px;top:640.3px;font-size:12px;line-height:12px;color:#4a4a4a;transform:scaleY(1.1);transform-origin:0 10px;">WIN-2BLHS9SEF4O (Virtual Memory)</div>
<div class="t" style="left:1071px;width:400px;text-align:right;top:642.3px;font-size:12px;line-height:12px;color:#349a34;transform:scaleY(1.1);transform-origin:0 10px;">55%</div>
<div class="t" style="left:1144.5px;top:683.1px;font-size:12px;line-height:12px;color:#4a4a4a;transform:scaleY(1.1);transform-origin:0 10px;">WIN-2BLHS9SEF4O (Physical Memory)</div>
<div class="t" style="left:1071px;width:400px;text-align:right;top:685.1px;font-size:12px;line-height:12px;color:#349a34;transform:scaleY(1.1);transform-origin:0 10px;">50%</div>
<div class="t" style="left:1144.5px;top:725.9px;font-size:12px;line-height:12px;color:#4a4a4a;transform:scaleY(1.1);transform-origin:0 10px;">SERVER (Physical Memory)</div>
<div class="t" style="left:1071px;width:400px;text-align:right;top:727.9px;font-size:12px;line-height:12px;color:#349a34;transform:scaleY(1.1);transform-origin:0 10px;">18%</div>
<div class="t" style="left:1144.5px;top:768.7px;font-size:12px;line-height:12px;color:#4a4a4a;transform:scaleY(1.1);transform-origin:0 10px;">SERVER (C:\ Label: Serial Number d0…</div>
<div class="t" style="left:1071px;width:400px;text-align:right;top:770.7px;font-size:12px;line-height:12px;color:#349a34;transform:scaleY(1.1);transform-origin:0 10px;">16%</div>
<div class="r" style="left:0px;top:825px;width:1500px;height:1px;background:#fdfdfd;"></div>
<div class="r" style="left:0px;top:826px;width:1500px;height:1px;background:#d8d8d8;"></div>
<div class="r" style="left:1px;top:387px;width:4px;height:44px;background:#3c3c3c;"></div>
</body></html>
